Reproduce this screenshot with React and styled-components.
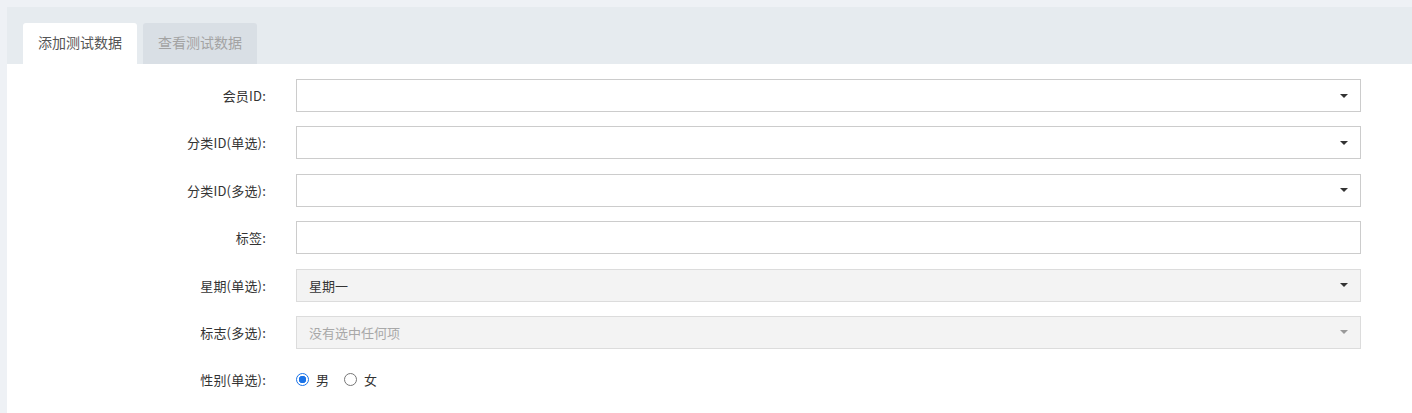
import React, { useState } from 'react'
import styled, { createGlobalStyle } from 'styled-components'

const GlobalStyle = createGlobalStyle`
    html, body {
        margin: 0;
        padding: 0;
        background: #eef1f5;
        font-family: "Noto Sans CJK SC", "Microsoft YaHei", sans-serif;
        font-size: 13px;
        color: #333;
    }
    * {
        box-sizing: border-box;
    }
`

const Page = styled.div`
    padding: 7px 0 0 7px;
`

const Panel = styled.div`
    background: #fff;
    min-height: 406px;
`

const TabBar = styled.div`
    display: flex;
    gap: 6px;
    padding: 16px 0 0 16px;
    background: #e6ebef;
`

const Tab = styled.div`
    width: 114px;
    height: 41px;
    display: flex;
    align-items: center;
    justify-content: center;
    padding-bottom: 3px;
    border-radius: 3px 3px 0 0;
    font-size: 14px;
    cursor: pointer;
    background: ${p => (p.$active ? '#fff' : '#d9dfe5')};
    color: ${p => (p.$active ? '#555' : '#a3a3a3')};
`

const Form = styled.div`
    padding: 15px 51px 20px 0;
`

const Row = styled.div`
    display: grid;
    grid-template-columns: 259px 1fr;
    column-gap: 30px;
    align-items: center;
    margin-bottom: 14.4px;
`

const Label = styled.label`
    text-align: right;
    color: #333;
    font-size: 13px;
    letter-spacing: 0.2px;
`

const Field = styled.div`
    position: relative;
    height: 33px;
    display: flex;
    align-items: center;
    padding: 0 30px 0 12px;
    border: 1px solid ${p => (p.$disabled ? '#dcdcdc' : '#cccccc')};
    background: ${p => (p.$disabled ? '#f3f3f3' : '#fff')};
    color: ${p => (p.$placeholder ? '#a8a8a8' : '#333')};
    font-size: 13px;
`

const Caret = styled.span`
    position: absolute;
    right: 12px;
    top: 50%;
    margin-top: -2px;
    width: 0;
    height: 0;
    border-left: 4px solid transparent;
    border-right: 4px solid transparent;
    border-top: 4px solid ${p => (p.$muted ? '#999' : '#333')};
`

const TextInput = styled.input`
    height: 33px;
    width: 100%;
    border: 1px solid #ccc;
    padding: 0 12px;
    font: inherit;
    outline: none;
`

const RadioGroup = styled.div`
    display: flex;
    align-items: center;
    height: 33px;
    gap: 15px;
`

const RadioLabel = styled.label`
    display: flex;
    align-items: center;
    gap: 7px;
    cursor: pointer;
`

const RadioDot = styled.input.attrs({ type: 'radio' })`
    appearance: none;
    margin: 0;
    width: 13px;
    height: 13px;
    border-radius: 50%;
    border: 1px solid #767676;
    background: #fff;
    &:checked {
        border: 1px solid #1a73e8;
        background: radial-gradient(circle, #1a73e8 0 3.5px, #fff 4px);
    }
`

function SelectBox({ value, placeholder, disabled }) {
    return (
        <Field $disabled={disabled} $placeholder={!value}>
            {value || placeholder}
            <Caret $muted={disabled && !value} />
        </Field>
    )
}

export default function App() {
    const [tab, setTab] = useState(0)
    const [sex, setSex] = useState('m')

    return (
        <>
            <GlobalStyle />
            <Page>
                <Panel>
                    <TabBar>
                        <Tab $active={tab === 0} onClick={() => setTab(0)}>添加测试数据</Tab>
                        <Tab $active={tab === 1} onClick={() => setTab(1)}>查看测试数据</Tab>
                    </TabBar>
                    <Form>
                        <Row>
                            <Label>会员ID:</Label>
                            <SelectBox />
                        </Row>
                        <Row>
                            <Label>分类ID(单选):</Label>
                            <SelectBox />
                        </Row>
                        <Row>
                            <Label>分类ID(多选):</Label>
                            <SelectBox />
                        </Row>
                        <Row>
                            <Label>标签:</Label>
                            <TextInput />
                        </Row>
                        <Row>
                            <Label>星期(单选):</Label>
                            <SelectBox value="星期一" disabled />
                        </Row>
                        <Row>
                            <Label>标志(多选):</Label>
                            <SelectBox placeholder="没有选中任何项" disabled />
                        </Row>
                        <Row>
                            <Label>性别(单选):</Label>
                            <RadioGroup>
                                <RadioLabel>
                                    <RadioDot name="sex" checked={sex === 'm'} onChange={() => setSex('m')} />
                                    男
                                </RadioLabel>
                                <RadioLabel>
                                    <RadioDot name="sex" checked={sex === 'f'} onChange={() => setSex('f')} />
                                    女
                                </RadioLabel>
                            </RadioGroup>
                        </Row>
                    </Form>
                </Panel>
            </Page>
        </>
    )
}
